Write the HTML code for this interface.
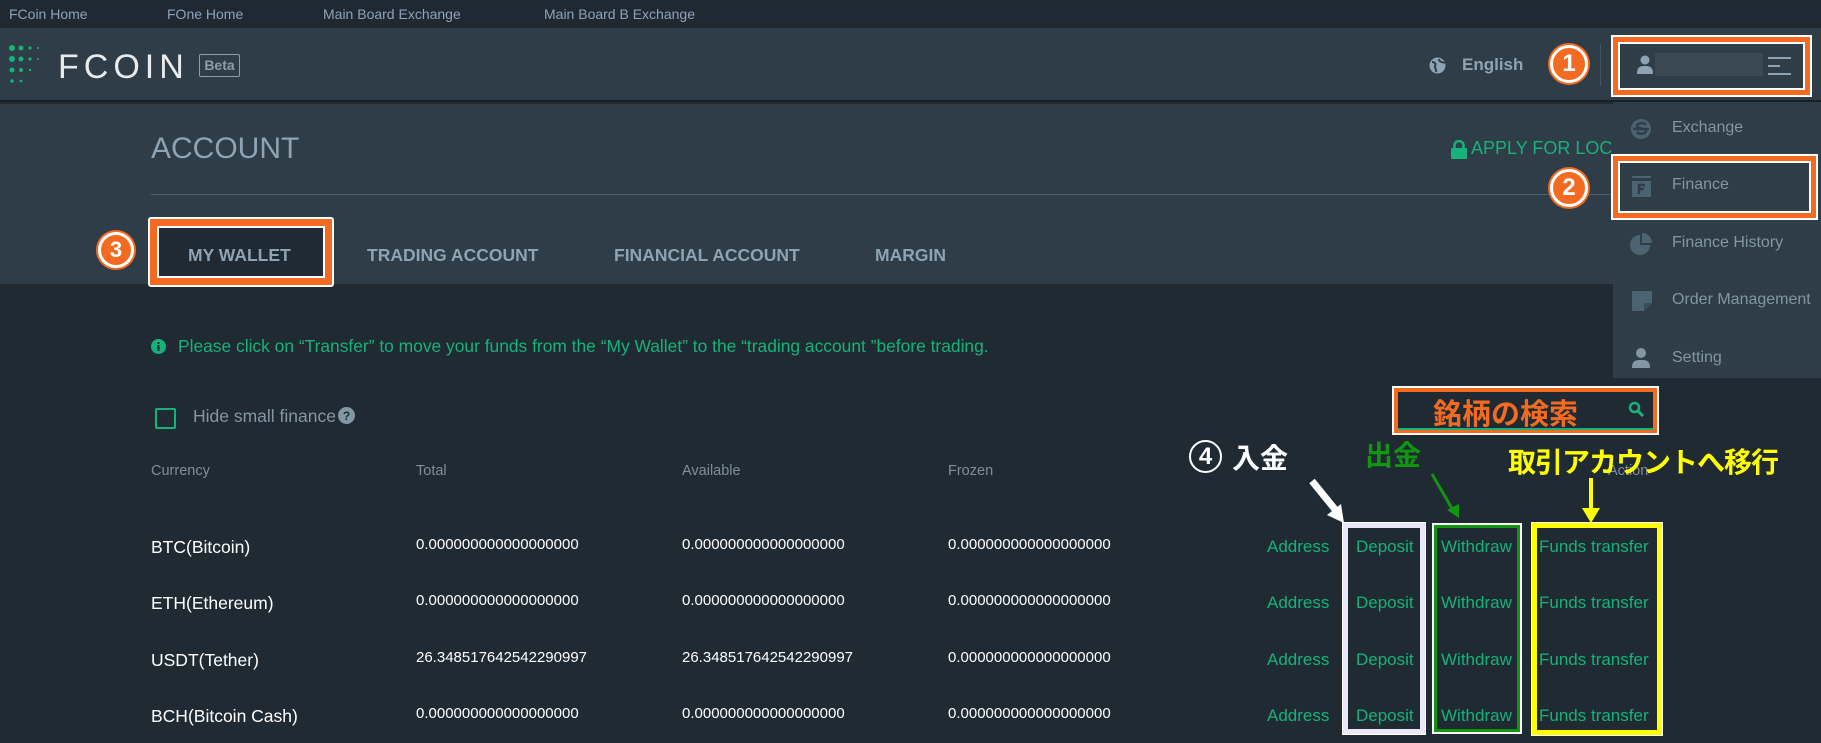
<!DOCTYPE html>
<html><head><meta charset="utf-8"><style>
*{margin:0;padding:0;box-sizing:border-box}
body{width:1821px;height:743px;background:#1f2a33;font-family:"Liberation Sans","Noto Sans CJK JP",sans-serif;position:relative;overflow:hidden}
.a{position:absolute;white-space:nowrap}
.top{left:0;top:0;width:1821px;height:28px;background:#1e2931}
.tl{color:#8ea3b8;font-size:14px;top:6px}
.hdr{left:0;top:28px;width:1821px;height:74px;background:#2e3d47;border-bottom:2px solid #172026}
.sub{left:0;top:104px;width:1821px;height:180px;background:#2e3d47}
.tab{color:#8ea3b3;font-size:17.5px;font-weight:bold;top:245px}
.dd{left:1613px;top:102px;width:208px;height:276px;background:#2e3d47}
.di{color:#8396a3;font-size:16px;left:1672px}
.g{color:#17b27a}
.hd{color:#7d8f9b;font-size:14.5px;top:463px}
.cur{color:#fff;font-size:17.5px;left:151px}
.num{color:#fff;font-size:15px}
.act{color:#17b27a;font-size:17px}
.circ{border-radius:50%;background:#f26b21;border:3px solid #fff;color:#fff;font-weight:bold;text-align:center;box-shadow:0 0 0 2px #f26b21}
</style></head><body>
<div class="a top"></div>
<div class="a tl" style="left:9px">FCoin Home</div>
<div class="a tl" style="left:167px">FOne Home</div>
<div class="a tl" style="left:323px">Main Board Exchange</div>
<div class="a tl" style="left:544px">Main Board B Exchange</div>
<div class="a hdr"></div>
<div class="a sub"></div>
<svg class="a" style="left:8px;top:45px" width="42" height="40">
<g fill="#17b27a"><circle cx="4" cy="3" r="3"/><circle cx="13" cy="3" r="2.5"/><circle cx="22" cy="3" r="1.6"/><circle cx="30" cy="3" r="1"/>
<circle cx="4" cy="14" r="3"/><circle cx="13" cy="14" r="2.5"/><circle cx="22" cy="14" r="1.6"/><circle cx="30" cy="14" r="1"/>
<circle cx="4" cy="25" r="2.5"/><circle cx="13" cy="25" r="2"/><circle cx="22" cy="25" r="1.2"/>
<circle cx="4" cy="36" r="1.8"/><circle cx="13" cy="36" r="1.4"/></g></svg>
<div class="a" style="left:58px;top:48px;color:#e8ecef;font-size:34px;letter-spacing:5px;font-weight:300">FCOIN</div>
<div class="a" style="left:199px;top:54px;width:41px;height:23px;border:1.5px solid #8c9eab;border-radius:2px;color:#8c9eab;font-size:14px;font-weight:bold;text-align:center;line-height:20px">Beta</div>
<svg class="a" style="left:1429px;top:57px" width="17" height="17"><circle cx="8.5" cy="8.5" r="8" fill="#8ea3b3"/><path d="M3 5c3 0 4 2 3 4s2 3 1 6M10 2c0 3 3 3 6 4" stroke="#2e3d47" stroke-width="2" fill="none"/></svg>
<div class="a" style="left:1462px;top:55px;color:#8ea3b3;font-size:17px;font-weight:bold">English</div>
<div class="a circ" style="left:1550px;top:45px;width:38px;height:38px;font-size:24px;line-height:32px">1</div>
<div class="a" style="left:1600px;top:44px;width:1px;height:42px;background:#46555f"></div>
<div class="a" style="left:1611px;top:35px;width:201px;height:62px;border:2px solid #fff;box-shadow:inset 0 0 0 5px #f26b21,inset 0 0 0 7px #fff"></div>
<svg class="a" style="left:1637px;top:55px" width="16" height="20"><circle cx="8" cy="5" r="4.5" fill="#8ea3b3"/><path d="M0 19c0-7 3-8 8-8s8 1 8 8z" fill="#8ea3b3"/></svg>
<div class="a" style="left:1655px;top:53px;width:108px;height:23px;background:#3a4953"></div>
<div class="a" style="left:1768px;top:57px;width:23px;height:2px;background:#8ea3b3"></div>
<div class="a" style="left:1768px;top:65px;width:12px;height:2px;background:#8ea3b3"></div>
<div class="a" style="left:1768px;top:73px;width:23px;height:2px;background:#8ea3b3"></div>
<div class="a" style="left:151px;top:132px;color:#8ea3b3;font-size:30px;font-weight:300">ACCOUNT</div>
<div class="a" style="left:151px;top:194px;width:1462px;height:1px;background:#4a6070"></div>
<svg class="a" style="left:1451px;top:140px" width="16" height="19"><path d="M3.5 8V5.5a4.5 4.5 0 0 1 9 0V8" stroke="#17b27a" stroke-width="2.5" fill="none"/><rect x="0" y="8" width="16" height="11" rx="1" fill="#17b27a"/></svg>
<div class="a g" style="left:1471px;top:138px;font-size:18px;width:142px;overflow:hidden">APPLY FOR LOCK</div>
<div class="a circ" style="left:1550px;top:169px;width:38px;height:38px;font-size:24px;line-height:32px">2</div>
<div class="a dd"></div>
<svg class="a" style="left:1630px;top:118px" width="22" height="22"><circle cx="11" cy="11" r="10" fill="#4c6371"/><path d="M16 7c-2-3-9-2-9 1s9 2 9 5-7 4-9 1M3 11h16" stroke="#2e3d47" stroke-width="2.5" fill="none"/></svg>
<div class="a di" style="top:119px">Exchange</div>
<svg class="a" style="left:1632px;top:176px" width="19" height="21"><rect y="0" width="19" height="2" fill="#4c6371"/><rect y="5" width="19" height="16" fill="#4c6371"/><path d="M13 9H7v9M7 13h5" stroke="#2e3d47" stroke-width="2.5" fill="none"/></svg>
<div class="a di" style="top:176px">Finance</div>
<div class="a" style="left:1611px;top:154px;width:207px;height:66px;border:2px solid #fff;box-shadow:inset 0 0 0 5px #f26b21,inset 0 0 0 7px #fff"></div>
<svg class="a" style="left:1630px;top:233px" width="22" height="22"><path d="M10 2a10 10 0 1 0 10 10H10z" fill="#4c6371"/><path d="M12 0a10 10 0 0 1 10 10H12z" fill="#4c6371"/></svg>
<div class="a di" style="top:234px">Finance History</div>
<svg class="a" style="left:1632px;top:291px" width="20" height="20"><path d="M0 0h20v12l-8 8H0z" fill="#4c6371"/><path d="M12 20v-8h8" fill="#3a4f5c"/></svg>
<div class="a di" style="top:291px">Order Management</div>
<svg class="a" style="left:1632px;top:348px" width="18" height="20"><circle cx="9" cy="5" r="5" fill="#8396a3"/><path d="M0 20c0-7 3-8 9-8s9 1 9 8z" fill="#8396a3"/></svg>
<div class="a di" style="top:349px">Setting</div>
<div class="a" style="left:148px;top:217px;width:186px;height:70px;border:2px solid #fff;border-radius:3px;box-shadow:inset 0 0 0 7px #f26b21,inset 0 0 0 9px #fff;background:#1f2a33"></div>
<div class="a tab" style="left:188px">MY WALLET</div>
<div class="a tab" style="left:367px">TRADING ACCOUNT</div>
<div class="a tab" style="left:614px">FINANCIAL ACCOUNT</div>
<div class="a tab" style="left:875px">MARGIN</div>
<div class="a circ" style="left:98px;top:232px;width:36px;height:36px;font-size:22px;line-height:30px">3</div>
<svg class="a" style="left:151px;top:339px" width="15" height="15"><circle cx="7.5" cy="7.5" r="7.5" fill="#17b27a"/><rect x="6.5" y="6" width="2" height="6" fill="#1f2a33"/><rect x="6.5" y="3" width="2" height="2" fill="#1f2a33"/></svg>
<div class="a g" style="left:178px;top:336px;font-size:17.4px">Please click on “Transfer” to move your funds from the “My Wallet” to the “trading account ”before trading.</div>
<div class="a" style="left:155px;top:408px;width:21px;height:21px;border:2px solid #17b27a;border-radius:2px"></div>
<div class="a" style="left:193px;top:406px;color:#8396a3;font-size:17.5px">Hide small finance</div>
<svg class="a" style="left:338px;top:407px" width="17" height="17"><circle cx="8.5" cy="8.5" r="8.5" fill="#8396a3"/><text x="8.5" y="13" font-size="12" font-weight="bold" text-anchor="middle" fill="#1f2a33" font-family="Liberation Sans">?</text></svg>
<div class="a hd" style="left:151px">Currency</div>
<div class="a hd" style="left:416px">Total</div>
<div class="a hd" style="left:682px">Available</div>
<div class="a hd" style="left:948px">Frozen</div>
<div class="a hd" style="left:1608px">Action</div>
<div class="a cur" style="top:537px">BTC(Bitcoin)</div>
<div class="a cur" style="top:593px">ETH(Ethereum)</div>
<div class="a cur" style="top:650px">USDT(Tether)</div>
<div class="a cur" style="top:706px">BCH(Bitcoin Cash)</div>
<div class="a num" style="left:416px;top:536px">0.000000000000000000</div>
<div class="a num" style="left:682px;top:536px">0.000000000000000000</div>
<div class="a num" style="left:948px;top:536px">0.000000000000000000</div>
<div class="a num" style="left:416px;top:592px">0.000000000000000000</div>
<div class="a num" style="left:682px;top:592px">0.000000000000000000</div>
<div class="a num" style="left:948px;top:592px">0.000000000000000000</div>
<div class="a num" style="left:416px;top:649px">26.348517642542290997</div>
<div class="a num" style="left:682px;top:649px">26.348517642542290997</div>
<div class="a num" style="left:948px;top:649px">0.000000000000000000</div>
<div class="a num" style="left:416px;top:705px">0.000000000000000000</div>
<div class="a num" style="left:682px;top:705px">0.000000000000000000</div>
<div class="a num" style="left:948px;top:705px">0.000000000000000000</div>
<div class="a" style="left:1343px;top:523px;width:82px;height:211px;border:5px solid #e8e8f8;box-shadow:0 0 0 1px #fff"></div>
<div class="a" style="left:1432px;top:523px;width:90px;height:211px;border:2px solid #fff;box-shadow:inset 0 0 0 3px #129612"></div>
<div class="a" style="left:1532px;top:523px;width:130px;height:212px;border:5px solid #ffff00;box-shadow:0 0 0 1px #fff"></div>
<div class="a act" style="left:1267px;top:537px">Address</div><div class="a act" style="left:1356px;top:537px">Deposit</div><div class="a act" style="left:1441px;top:537px">Withdraw</div><div class="a act" style="left:1539px;top:537px">Funds transfer</div>
<div class="a act" style="left:1267px;top:593px">Address</div><div class="a act" style="left:1356px;top:593px">Deposit</div><div class="a act" style="left:1441px;top:593px">Withdraw</div><div class="a act" style="left:1539px;top:593px">Funds transfer</div>
<div class="a act" style="left:1267px;top:650px">Address</div><div class="a act" style="left:1356px;top:650px">Deposit</div><div class="a act" style="left:1441px;top:650px">Withdraw</div><div class="a act" style="left:1539px;top:650px">Funds transfer</div>
<div class="a act" style="left:1267px;top:706px">Address</div><div class="a act" style="left:1356px;top:706px">Deposit</div><div class="a act" style="left:1441px;top:706px">Withdraw</div><div class="a act" style="left:1539px;top:706px">Funds transfer</div>
<div class="a" style="left:1392px;top:386px;width:267px;height:49px;border:2px solid #fff;box-shadow:inset 0 0 0 4px #f26b21;background:#1f2a33"></div>
<div class="a" style="left:1398px;top:428px;width:255px;height:2px;background:#17b27a"></div>
<div class="a" style="left:1433px;top:391px;color:#f26b21;font-size:29px;font-weight:bold">銘柄の検索</div>
<svg class="a" style="left:1628px;top:401px" width="16" height="16"><circle cx="6.5" cy="6.5" r="4.5" stroke="#17b27a" stroke-width="2.5" fill="none"/><path d="M10 10l5 5" stroke="#17b27a" stroke-width="3"/></svg>
<div class="a" style="left:1189px;top:440px;width:33px;height:33px;border:2px solid #fff;border-radius:50%;color:#fff;font-size:24px;font-weight:bold;text-align:center;line-height:29px">4</div>
<div class="a" style="left:1232px;top:437px;color:#fff;font-size:28px;font-weight:bold">入金</div>
<div class="a" style="left:1365px;top:434px;color:#129612;font-size:28px;font-weight:bold">出金</div>
<div class="a" style="left:1508px;top:441px;color:#ffff00;font-size:28px;font-weight:bold;letter-spacing:-1px">取引アカウントへ移行</div>
<svg class="a" style="left:1300px;top:470px" width="380" height="60">
<path d="M12 11L38 43" stroke="#fff" stroke-width="7"/><path d="M27 45l17 8-3-19z" fill="#fff"/>
<path d="M132 4L154 42" stroke="#129612" stroke-width="3"/><path d="M147 40l12 8 0-14z" fill="#129612"/>
<path d="M291 8V40" stroke="#ffff00" stroke-width="4"/><path d="M282 38h18l-9 15z" fill="#ffff00"/>
</svg>
</body></html>
